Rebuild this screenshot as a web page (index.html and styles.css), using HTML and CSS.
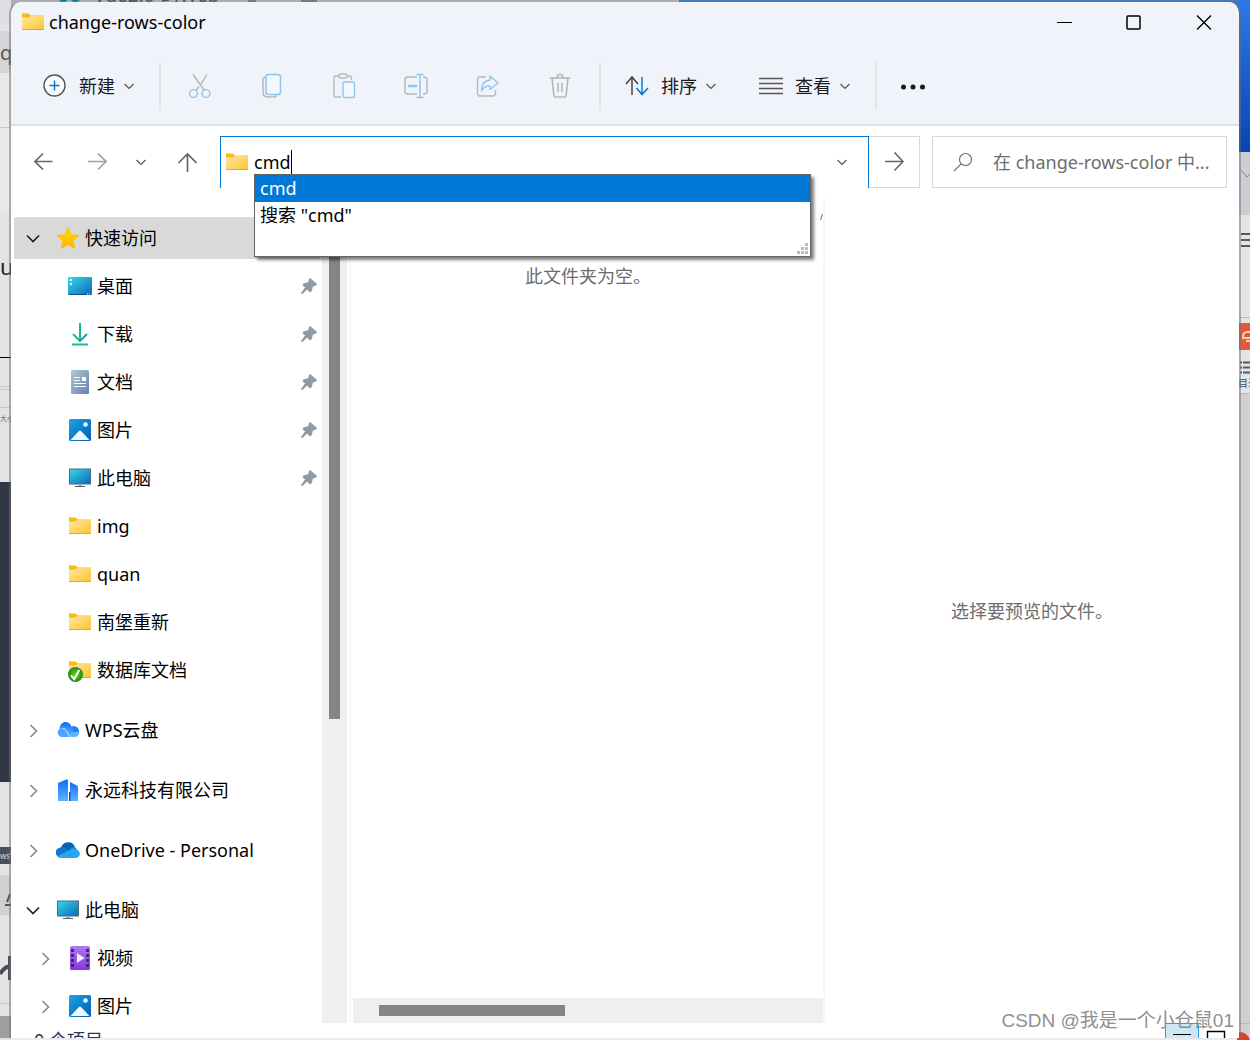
FILE: index.html
```html
<!DOCTYPE html>
<html lang="zh-CN">
<head>
    <meta charset="UTF-8">
    <meta name="viewport" content="width=device-width, initial-scale=1.0">
    <title>change-rows-color</title>
    <link rel="stylesheet" href="styles.css">
</head>
<body>
    <!-- Shared icons -->
    <svg class="sprite" aria-hidden="true">
        <defs>
            <linearGradient id="gFolder" x1="0" y1="0" x2="1" y2="1"><stop offset="0" stop-color="#ffe7a0"/><stop offset="1" stop-color="#fdc52f"/></linearGradient>
            <linearGradient id="gScreen" x1="0" y1="0" x2="1" y2="1"><stop offset="0" stop-color="#35dbe6"/><stop offset="1" stop-color="#0b66bd"/></linearGradient>
            <linearGradient id="gDown" x1="0" y1="0" x2="1" y2="1"><stop offset="0" stop-color="#2fc58b"/><stop offset="1" stop-color="#0ea5a5"/></linearGradient>
            <linearGradient id="gDoc" x1="0" y1="0" x2="1" y2="1"><stop offset="0" stop-color="#b4c6d8"/><stop offset="1" stop-color="#6484a8"/></linearGradient>
            <linearGradient id="gPic" x1="0" y1="0" x2="1" y2="1"><stop offset="0" stop-color="#1ba1e6"/><stop offset="1" stop-color="#0561b5"/></linearGradient>
            <linearGradient id="gWps" x1="0" y1="0" x2="0" y2="1"><stop offset="0" stop-color="#0f6df5"/><stop offset="1" stop-color="#5cb4ff"/></linearGradient>
            <linearGradient id="gVideo" x1="0" y1="0" x2="0" y2="1"><stop offset="0" stop-color="#b07af5"/><stop offset="1" stop-color="#8238dd"/></linearGradient>
            <linearGradient id="gStar" x1="0" y1="0" x2="0" y2="1"><stop offset="0" stop-color="#ffdc00"/><stop offset="1" stop-color="#ffb400"/></linearGradient>
            <radialGradient id="gOk"><stop offset="0" stop-color="#6fcf1e"/><stop offset="1" stop-color="#218a12"/></radialGradient>
        </defs>
        <symbol id="folder" viewBox="0 0 24 24">
            <path d="M1 3.500h7l1.500 2H23v4H1z" fill="#fab916"/>
            <path d="M1 7.500h7L9.500 6H23v14H1z" fill="url(#gFolder)"/>
            <path d="M1 19.500h22" stroke="#eba51f"/>
        </symbol>
        <symbol id="star" viewBox="0 0 24 24">
            <path d="M12 1.500l3.200 7.200 7.800.8-5.900 5.200 1.800 7.700L12 18.400l-6.900 4 1.800-7.700L1 9.500l7.800-.8z" fill="url(#gStar)" stroke="#fcbf0a" stroke-linejoin="round"/>
        </symbol>
        <symbol id="desktop" viewBox="0 0 24 24">
            <rect y="3" width="24" height="18" rx="1" fill="url(#gScreen)"/>
            <path d="M1 20.500h22" stroke="#0a5286"/>
            <path d="M2 5h2v2H2zM2 9h2v2H2z" fill="#e9feff"/>
            <path d="M19 20h1M21 20h1" stroke="#fff"/>
        </symbol>
        <symbol id="download" viewBox="0 0 24 24">
            <path d="M12 1v17M5 12l7 7 7-7" fill="none" stroke="url(#gDown)" stroke-width="2"/>
            <rect x="4" y="21.500" width="16" height="2" fill="#21b98f"/>
        </symbol>
        <symbol id="document" viewBox="0 0 24 24">
            <rect x="3" width="18" height="24" rx="1.500" fill="url(#gDoc)"/>
            <path d="M6 7.500h6M6 10.500h6M6 13.500h12M6 16.500h12" stroke="#fff" stroke-width="1.200"/>
            <path d="M14 7h4v4h-4z" fill="#fff"/>
        </symbol>
        <symbol id="picture" viewBox="0 0 24 24">
            <rect x="1" y="1" width="22" height="22" rx="1.500" fill="url(#gPic)"/>
            <circle cx="17.500" cy="6.500" r="2.200" fill="#fff"/>
            <path d="M2.500 22l8.500-9q1-1 2 0l8.500 9z" fill="#f2f8fd"/>
        </symbol>
        <symbol id="computer" viewBox="0 0 24 24">
            <rect x="1.500" y="3" width="21" height="15" fill="url(#gScreen)" stroke="#4b6b79"/>
            <path d="M10 18.500h4V21h-4z" fill="#a4adb3"/>
            <path d="M7 20.500h10" stroke="#59636b"/>
        </symbol>
        <symbol id="folder-ok" viewBox="0 0 24 24">
            <use href="#folder"/>
            <circle cx="7.500" cy="16.500" r="7.500" fill="url(#gOk)"/>
            <path d="M3 17.500l3.300 3.500 5-9" fill="none" stroke="#fff" stroke-width="2"/>
        </symbol>
        <symbol id="wps" viewBox="0 0 24 24">
            <circle cx="17.500" cy="13.500" r="5.500" fill="#1c82f0"/>
            <path d="M4 11a5.800 5.800 0 0 1 11.400-2.400c2 1.200 1.800 5 1.600 9.400H8z" fill="url(#gWps)"/>
            <path d="M12 19l7.500 0a5 5 0 0 0 3.500-5c-4-1-8 0-11 5z" fill="#5db4ff"/>
            <path d="M5.500 19a4.500 4.500 0 1 1 3-8.300c3 1 4 5 5.500 8.300z" fill="#4fa3fb"/>
            <path d="M6.500 10.200c4.500 0 4.500 6 8 8.800" fill="none" stroke="#d9eeff"/>
        </symbol>
        <symbol id="building" viewBox="0 0 24 24">
            <path d="M2 5l8-3.500q2-.5 2 1V23H2z" fill="url(#gWps)"/>
            <path d="M14 4l7 3.500q1 .5 1 1.500v14h-8z" fill="url(#gWps)"/>
            <path d="M13 14h1.500v9H13z" fill="#0750c8"/>
        </symbol>
        <symbol id="onedrive" viewBox="0 0 24 24">
            <path d="M5 10a7.300 7.300 0 0 1 14-1l-4 6z" fill="#0364b8"/>
            <path d="M5 19.500A5 5 0 0 1 4.500 9.500q5-1 10.500 5L7 19z" fill="#0f78d4"/>
            <path d="M13 13c2-5 7-5 8-1l-4 4z" fill="#1490df"/>
            <path d="M1.500 18l12.500-6q2-1 4-1 5 .3 6 4.500-.5 4-4.500 4.500H5q-2.500 0-3.500-2z" fill="#28a8ea"/>
        </symbol>
        <symbol id="video" viewBox="0 0 24 24">
            <rect x="2" width="20" height="24" rx="1.500" fill="url(#gVideo)"/>
            <path d="M4.500 3v20M19.500 3v20" stroke="#46227a" stroke-width="3" stroke-dasharray="3 2"/>
            <path d="M9 7l7.500 5L9 17z" fill="#f6efff"/>
        </symbol>
        <symbol id="pin" viewBox="0 0 16 16">
            <path d="M9 0l7 6-1 1.500-3 1-1.500 5-1.500 1L6 11.500 1.500 16 0 15.800.300 14.500 4 9.500 1.500 7l.8-1.500L7 4.200l1-3.500z" fill="#8e9ba3"/>
        </symbol>
        <symbol id="chevron" viewBox="0 0 12 12">
            <path d="M1.500 4L6 8.500 10.500 4" fill="none" stroke="currentColor" stroke-width="1.200"/>
        </symbol>
        <symbol id="open" viewBox="0 0 14 14">
            <path d="M1 4.500l6 6 6-6" fill="none" stroke="#222" stroke-width="1.700"/>
        </symbol>
        <symbol id="closed" viewBox="0 0 14 14">
            <path d="M4.500 2l6 6-6 6" fill="none" stroke="#8a8a8a" stroke-width="1.600"/>
        </symbol>
    </svg>

    <!-- Slices of the windows behind -->
    <div class="backdrop-top">
        <svg width="679" height="2"><text x="57" y="2" font-size="16" font-weight="700" fill="#1c7d9a">UU</text><text x="94" y="2" font-size="19" fill="#555">Vue2.0-的Web</text><path d="M248 1h8M301 1h16" stroke="#444"/></svg>
    </div>
    <svg class="backdrop-left" width="11" height="1040">
        <rect width="11" height="1040" fill="#e3e3e3"/>
        <rect width="11" height="25" fill="#dcdee0"/>
        <rect y="31" width="11" height="42" fill="#d4d5d6"/>
        <text x="0" y="60" font-size="20" fill="#555">q</text>
        <rect y="73" width="11" height="140" fill="#e9e9e9"/>
        <path d="M0 127.500h11M0 386.500h11M0 389.500h11M0 407.500h11M0 1003.500h11" stroke="#c8c8c8"/>
        <text x="0" y="275" font-size="22" fill="#222">u</text>
        <path d="M0 357.500h11" stroke="#000"/>
        <text x="0" y="421" font-size="7" fill="#667">大小</text>
        <rect y="482" width="11" height="300" fill="#323748"/>
        <rect y="847" width="11" height="17" fill="#4a4e58"/>
        <text x="0" y="859" font-size="8" fill="#ddd">ws\</text>
        <rect y="875" width="11" height="40" fill="#cfd0d2"/>
        <path d="M10 894l-3 8M5 905h6" stroke="#555" stroke-width="2"/>
        <path d="M0 974q5-8 11-8M10 956v24" fill="none" stroke="#4b4e55" stroke-width="4"/>
        <rect y="1016" width="11" height="22" fill="#9f9f9f"/>
    </svg>
    <svg class="backdrop-right" width="13" height="1040">
        <defs><linearGradient id="gSky" x1="0" y1="0" x2="0" y2="1"><stop offset="0" stop-color="#2f78e8"/><stop offset="1" stop-color="#0845b4"/></linearGradient></defs>
        <rect width="13" height="1040" fill="#d0d0d0"/>
        <rect width="13" height="152" fill="url(#gSky)"/>
        <rect y="152" width="13" height="63" fill="#cbcfd4"/>
        <path d="M4 170l6 7 4-4" fill="none" stroke="#888"/>
        <rect y="215" width="13" height="178" fill="#e4e4e4"/>
        <path d="M4 234h9M4 240h9M4 246h9" stroke="#555a60" stroke-width="2"/>
        <path d="M0 317.500h13M0 393.500h13M0 1023.500h13" stroke="#bbb"/>
        <rect y="323" width="13" height="27" fill="#e4573a"/>
        <path d="M6 337q0-5 4-5h3M5 338h8M9 341h4" fill="none" stroke="#ffd0a8" stroke-width="2"/>
        <path d="M3 362.500h10M3 367.500h10M3 372.500h10" stroke="#555a68" stroke-width="2" stroke-dasharray="2 1 10"/>
        <text x="1" y="387" font-size="10" fill="#444a5c">目录</text>
        <circle cx="3" cy="1042" r="10" fill="#d6432c"/>
    </svg>

    <div class="window">
        <header class="titlebar">
            <svg class="icon"><use href="#folder"/></svg>
            <h1 class="title">change-rows-color</h1>
            <button class="caption" aria-label="最小化"><svg width="16" height="16"><path d="M1 8.500h15" stroke="#000"/></svg></button>
            <button class="caption" aria-label="最大化"><svg width="16" height="16"><rect x="1" y="2" width="13" height="13" rx="1" fill="none" stroke="#000" stroke-width="1.500"/></svg></button>
            <button class="caption" aria-label="关闭"><svg width="16" height="16"><path d="M1 1.500l14 14M15 1.500l-14 14" stroke="#000" stroke-width="1.400"/></svg></button>
        </header>

        <div class="toolbar">
            <button class="tool">
                <svg width="24" height="24" fill="none"><circle cx="11.500" cy="11.500" r="10.500" fill="#fafbfd" stroke="#555" stroke-width="1.400"/><path d="M11.500 6.500v10M6.500 11.500h10" stroke="#0078d4" stroke-width="1.500"/></svg>
                <span>新建</span>
                <svg class="chevron"><use href="#chevron"/></svg>
            </button>
            <span class="separator"></span>
            <button class="tool-icon" aria-label="剪切" disabled>
                <svg width="24" height="26" fill="none" stroke-width="1.400"><path d="M5 1.500l11.500 16M19 1.500l-6 9.500M11 13.500l-3 4" stroke="#b4b4b8"/><circle cx="5.500" cy="20.500" r="3.900" stroke="#8fc5ec"/><circle cx="18" cy="20.500" r="3.900" stroke="#8fc5ec"/></svg>
            </button>
            <button class="tool-icon" aria-label="复制" disabled>
                <svg width="24" height="26" fill="none" stroke-width="1.500"><path d="M5 4q-2 1-2 3v12q0 5 5 5h5q3 0 3.500-1.500" stroke="#b8b8bc"/><rect x="6" y="1.500" width="14.500" height="20" rx="2.500" fill="#f2f8fd" stroke="#8fc5ec"/></svg>
            </button>
            <button class="tool-icon" aria-label="粘贴" disabled>
                <svg width="24" height="26" fill="none" stroke-width="1.400"><path d="M9 24H4q-2 0-2-2V5q0-2 2-2h3M15 3h3q1.500 0 1.500 2v2" stroke="#b8b8bc"/><rect x="7" y="1" width="8" height="4" rx="2" stroke="#b8b8bc"/><rect x="11" y="9" width="11.500" height="15.500" rx="1.500" fill="#f2f8fd" stroke="#8fc5ec"/></svg>
            </button>
            <button class="tool-icon" aria-label="重命名" disabled>
                <svg width="24" height="26" fill="none" stroke-width="1.500"><path d="M13 4H3.500Q1 4 1 6.500v12Q1 21 3.500 21H13M19 4q4 0 4 2.500v12q0 2.500-4 2.500" stroke="#b8b8bc"/><path d="M16 1.500v23M12.500 1.500h7M12.500 24.500h7" stroke="#8fc5ec"/><path d="M4 13h9" stroke="#8fc5ec" stroke-width="2.500"/></svg>
            </button>
            <button class="tool-icon" aria-label="共享" disabled>
                <svg width="24" height="26" fill="none" stroke-width="1.400" stroke-linejoin="round"><path d="M10 4H4Q1.500 4 1.500 6.500v13Q1.500 23 4 23h13q2.500 0 2.500-3v-3" stroke="#b8b8bc"/><path d="M14 3l8 7-8 6.500V13q-5-.5-8.500 4.500Q5.500 8 14 7z" stroke="#8fc5ec"/></svg>
            </button>
            <button class="tool-icon" aria-label="删除" disabled>
                <svg width="24" height="26" fill="none" stroke="#b4b4b8" stroke-width="1.500"><path d="M1.500 5h21M9 5q0-3.500 3-3.500T15 5M4 5l1.800 17q.2 2 2.200 2h8q2 0 2.200-2L20 5M10 10v9M14 10v9"/></svg>
            </button>
            <span class="separator"></span>
            <button class="tool">
                <svg width="24" height="24" fill="none" stroke-width="1.500"><path d="M7 21V3M1 10l6-7 6 7" stroke="#444"/><path d="M17 3v18M11.500 14l5.500 6.500 6-6.500" stroke="#0078d4"/></svg>
                <span>排序</span>
                <svg class="chevron"><use href="#chevron"/></svg>
            </button>
            <button class="tool">
                <svg width="24" height="24"><path d="M0 4.500h24M0 9.500h24M0 14.500h24M0 19.500h24" stroke="#555" stroke-width="1.300"/></svg>
                <span>查看</span>
                <svg class="chevron"><use href="#chevron"/></svg>
            </button>
            <span class="separator"></span>
            <button class="more" aria-label="更多">
                <svg width="26" height="24" fill="#1a1a1a"><circle cx="3.500" cy="13" r="2.500"/><circle cx="13" cy="13" r="2.500"/><circle cx="22.500" cy="13" r="2.500"/></svg>
            </button>
        </div>

        <div class="navbar">
            <button class="nav" aria-label="后退"><svg width="20" height="20" fill="none" stroke="#666" stroke-width="1.700"><path d="M19.500 9.500h-17M10 1.500l-8 8 8 8"/></svg></button>
            <button class="nav" aria-label="前进"><svg width="20" height="20" fill="none" stroke="#a0a0a0" stroke-width="1.700"><path d="M1 9.500h17.500M11 1.500l8 8-8 8"/></svg></button>
            <button class="nav nav-small" aria-label="最近位置"><svg class="chevron"><use href="#chevron"/></svg></button>
            <button class="nav nav-up" aria-label="向上"><svg width="20" height="20" fill="none" stroke="#666" stroke-width="1.700"><path d="M10.500 20V2M1.500 11l9-9 9 9"/></svg></button>

            <div class="address">
                <svg class="icon"><use href="#folder"/></svg>
                <input class="address-input" type="text" value="cmd" aria-label="地址">
                <span class="caret"></span>
                <button class="history" aria-label="以前的位置"><svg class="chevron"><use href="#chevron"/></svg></button>
                <ul class="suggestions">
                    <li class="suggestion active">cmd</li>
                    <li class="suggestion">搜索 "cmd"</li>
                    <li class="grip"><svg width="12" height="12" fill="#bbb"><path d="M8 0h3v3H8zM4 4h3v3H4zM8 4h3v3H8zM0 8h3v3H0zM4 8h3v3H4zM8 8h3v3H8z"/></svg></li>
                </ul>
            </div>
            <button class="go" aria-label="转到"><svg width="20" height="20" fill="none" stroke="#666" stroke-width="1.600"><path d="M1 9.500h18M10.500.5l8.500 9-8.500 9"/></svg></button>
            <div class="search">
                <svg width="20" height="20" fill="none" stroke="#777" stroke-width="1.200"><circle cx="12.500" cy="7.500" r="6"/><path d="M8 12l-7 7"/></svg>
                <input class="search-input" type="text" placeholder="在 change-rows-color 中..." aria-label="搜索">
            </div>
        </div>

        <main class="panes">
            <nav class="sidebar">
                <ul class="group">
                    <li class="item selected"><svg class="toggle"><use href="#open"/></svg><svg class="icon"><use href="#star"/></svg><a href="#">快速访问</a></li>
                    <li class="item child"><svg class="icon"><use href="#desktop"/></svg><a href="#">桌面</a><svg class="pin"><use href="#pin"/></svg></li>
                    <li class="item child"><svg class="icon"><use href="#download"/></svg><a href="#">下载</a><svg class="pin"><use href="#pin"/></svg></li>
                    <li class="item child"><svg class="icon"><use href="#document"/></svg><a href="#">文档</a><svg class="pin"><use href="#pin"/></svg></li>
                    <li class="item child"><svg class="icon"><use href="#picture"/></svg><a href="#">图片</a><svg class="pin"><use href="#pin"/></svg></li>
                    <li class="item child"><svg class="icon"><use href="#computer"/></svg><a href="#">此电脑</a><svg class="pin"><use href="#pin"/></svg></li>
                    <li class="item child"><svg class="icon"><use href="#folder"/></svg><a href="#">img</a></li>
                    <li class="item child"><svg class="icon"><use href="#folder"/></svg><a href="#">quan</a></li>
                    <li class="item child"><svg class="icon"><use href="#folder"/></svg><a href="#">南堡重新</a></li>
                    <li class="item child"><svg class="icon"><use href="#folder-ok"/></svg><a href="#">数据库文档</a></li>
                </ul>
                <ul class="group">
                    <li class="item"><svg class="toggle"><use href="#closed"/></svg><svg class="icon"><use href="#wps"/></svg><a href="#">WPS云盘</a></li>
                </ul>
                <ul class="group">
                    <li class="item"><svg class="toggle"><use href="#closed"/></svg><svg class="icon"><use href="#building"/></svg><a href="#">永远科技有限公司</a></li>
                </ul>
                <ul class="group">
                    <li class="item"><svg class="toggle"><use href="#closed"/></svg><svg class="icon"><use href="#onedrive"/></svg><a href="#">OneDrive - Personal</a></li>
                </ul>
                <ul class="group">
                    <li class="item"><svg class="toggle"><use href="#open"/></svg><svg class="icon"><use href="#computer"/></svg><a href="#">此电脑</a></li>
                    <li class="item nested"><svg class="toggle"><use href="#closed"/></svg><svg class="icon"><use href="#video"/></svg><a href="#">视频</a></li>
                    <li class="item nested"><svg class="toggle"><use href="#closed"/></svg><svg class="icon"><use href="#picture"/></svg><a href="#">图片</a></li>
                </ul>
            </nav>
            <div class="scroll-y"><div class="thumb-y"></div></div>
            <section class="files">
                <svg class="header-edge" width="3" height="8"><path d="M2.500 1L.5 7" stroke="#667"/></svg>
                <p class="empty">此文件夹为空。</p>
                <div class="scroll-x"><div class="thumb-x"></div></div>
            </section>
            <aside class="preview">选择要预览的文件。</aside>
        </main>

        <footer class="statusbar">
            <span class="count">0 个项目</span>
            <button class="view current" aria-label="详细信息"><svg width="20" height="16" stroke="#000"><path d="M1 10.500h18"/></svg></button>
            <button class="view" aria-label="大图标"><svg width="20" height="16" fill="none" stroke="#000" stroke-width="1.400"><path d="M1.500 16V8.500h17V16"/></svg></button>
        </footer>
    </div>
    <div class="watermark">CSDN @我是一个小仓鼠01</div>
</body>
</html>
```
FILE: styles.css
```css
* {
    box-sizing: border-box;
}

body {
    margin: 0;
    height: 100vh;
    overflow: hidden;
    padding: 2px 9px 2px 9px;
    background-color: #ebebeb;
    position: relative;
    font-family: "Noto Sans", "Noto Sans CJK SC", sans-serif;
    font-size: 18px;
    line-height: 26px;
    color: #000;
}

svg {
    display: block;
    flex: none;
}

button {
    display: flex;
    align-items: center;
    justify-content: center;
    padding: 0;
    border: none;
    background: none;
    font: inherit;
    color: #1a1a1a;
}

input {
    padding: 0;
    border: none;
    outline: none;
    background: none;
    font: inherit;
    color: #000;
}

ul {
    list-style: none;
    margin: 0;
    padding: 0;
}

a {
    color: inherit;
    text-decoration: none;
}

.sprite {
    position: absolute;
    width: 0;
    height: 0;
}

.icon {
    width: 24px;
    height: 24px;
}

.chevron {
    width: 12px;
    height: 12px;
    color: #555;
}

/* Windows behind this one */
.backdrop-top {
    position: absolute;
    top: 0;
    left: 0;
    right: 0;
    height: 20px;
    background: linear-gradient(to right, #adadad 679px, #4a76b8 679px);
}

.backdrop-left {
    position: absolute;
    top: 0;
    left: 0;
}

.backdrop-right {
    position: absolute;
    top: 0;
    right: 0;
}

.window {
    position: relative;
    display: flex;
    flex-direction: column;
    height: 100%;
    overflow: hidden;
    background-color: #fff;
    background-clip: padding-box;
    border: 2px solid rgba(110, 110, 110, 0.5);
    border-width: 0 2px;
    border-radius: 12px 12px 0 0;
}

/* Title bar */
.titlebar {
    display: flex;
    align-items: center;
    flex: none;
    height: 40px;
    padding-left: 10px;
    background-color: #f0f3fa;
}

.title {
    flex: 1;
    margin: 0 0 0 4px;
    font-size: 18px;
    font-weight: 400;
}

.caption {
    width: 70px;
    height: 40px;
}

/* Toolbar */
.toolbar {
    display: flex;
    align-items: center;
    flex: none;
    padding: 20px 0 14px 11px;
    background-color: #f0f3fa;
    border-bottom: 2px solid #dcdfe4;
}

.tool {
    height: 48px;
    padding: 0 21px;
}

.tool span {
    margin: 0 8px 0 12px;
}

.tool-icon {
    width: 72px;
    height: 48px;
}

.more {
    width: 66px;
    height: 48px;
}

.separator {
    width: 2px;
    height: 48px;
    margin: 0 3px;
    background-color: #e1e4e9;
}

/* Address row */
.navbar {
    display: flex;
    align-items: center;
    flex: none;
    padding: 10px 12px 10px 5px;
}

.nav {
    width: 54px;
    height: 52px;
}

.nav-small {
    width: 34px;
}

.nav-up {
    width: 58px;
}

.address {
    position: relative;
    display: flex;
    align-items: center;
    flex: 1;
    height: 52px;
    margin-left: 4px;
    padding: 0 0 2px 4px;
    border: 1px solid #0078d4;
    border-bottom: none;
}

.address-input {
    field-sizing: content;
    margin-left: 5px;
}

.caret {
    width: 1px;
    height: 24px;
    background-color: #000;
}

.history {
    width: 52px;
    height: 48px;
    margin-left: auto;
}

.suggestions {
    position: absolute;
    z-index: 2;
    top: 37px;
    left: 33px;
    right: 57px;
    background-color: #fff;
    border: 1px solid #646464;
    box-shadow: 3px 3px 3px rgba(0, 0, 0, 0.5);
}

.suggestion {
    height: 27px;
    padding-left: 5px;
}

.suggestion.active {
    background-color: #0078d7;
    color: #fff;
}

.grip {
    display: flex;
    align-items: flex-end;
    justify-content: flex-end;
    height: 27px;
    padding: 1px;
}

.go {
    width: 51px;
    height: 52px;
    border: 1px solid #d9d9d9;
    border-left: none;
}

.search {
    display: flex;
    align-items: center;
    width: 295px;
    height: 52px;
    margin-left: 12px;
    padding-left: 20px;
    border: 1px solid #d9d9d9;
}

.search-input {
    flex: 1;
    min-width: 0;
    margin-left: 20px;
}

.search-input::placeholder {
    color: #6d6d6d;
    opacity: 1;
}

/* Panes */
.panes {
    display: flex;
    flex: 1;
    min-height: 0;
}

.sidebar {
    display: flex;
    flex-direction: column;
    gap: 18px;
    width: 311px;
    padding: 19px 2px 0 3px;
    overflow: hidden;
}

.group {
    display: flex;
    flex-direction: column;
    gap: 6px;
}

.item {
    display: flex;
    align-items: center;
    height: 42px;
    padding-left: 12px;
    border-radius: 2px;
}

.item a {
    flex: 1;
    margin-left: 5px;
}

.selected {
    background-color: #d9d9d9;
}

.child {
    padding-left: 54px;
}

.nested {
    padding-left: 24px;
}

.toggle {
    width: 14px;
    height: 14px;
    margin-right: 16px;
}

.pin {
    width: 16px;
    height: 16px;
    margin-right: 3px;
}

.scroll-y {
    width: 25px;
    padding: 24px 7px 0;
    background-color: #efefef;
}

.thumb-y {
    height: 497px;
    background-color: #858585;
}

.files {
    display: flex;
    flex-direction: column;
    width: 476px;
    padding-left: 2px;
    border-left: 2px solid #f7f7f7;
    border-right: 2px solid #f7f7f7;
    margin-left: 2px;
}

.header-edge {
    align-self: flex-end;
    margin-top: 15px;
}

.empty {
    flex: 1;
    margin: 42px 0 0;
    text-align: center;
    color: #6d6d6d;
}

.scroll-x {
    height: 25px;
    padding: 7px 26px;
    background-color: #efefef;
}

.thumb-x {
    width: 186px;
    height: 11px;
    background-color: #858585;
}

.preview {
    display: flex;
    align-items: center;
    justify-content: center;
    flex: 1;
    color: #6d6d6d;
}

/* Status bar */
.statusbar {
    display: flex;
    flex: none;
    height: 15px;
    padding: 0 6px 0 23px;
    overflow: hidden;
}

.count {
    flex: 1;
    margin-top: 4px;
    color: #1e395b;
}

.view {
    width: 34px;
    height: 32px;
    align-items: flex-start;
}

.current {
    background-color: #cce8f7;
    border: 1px solid #26a0da;
}

.watermark {
    position: absolute;
    right: 16px;
    bottom: 6px;
    font-family: "Liberation Sans", "Noto Sans CJK SC", sans-serif;
    font-size: 19px;
    color: #8f8f8f;
}
```
